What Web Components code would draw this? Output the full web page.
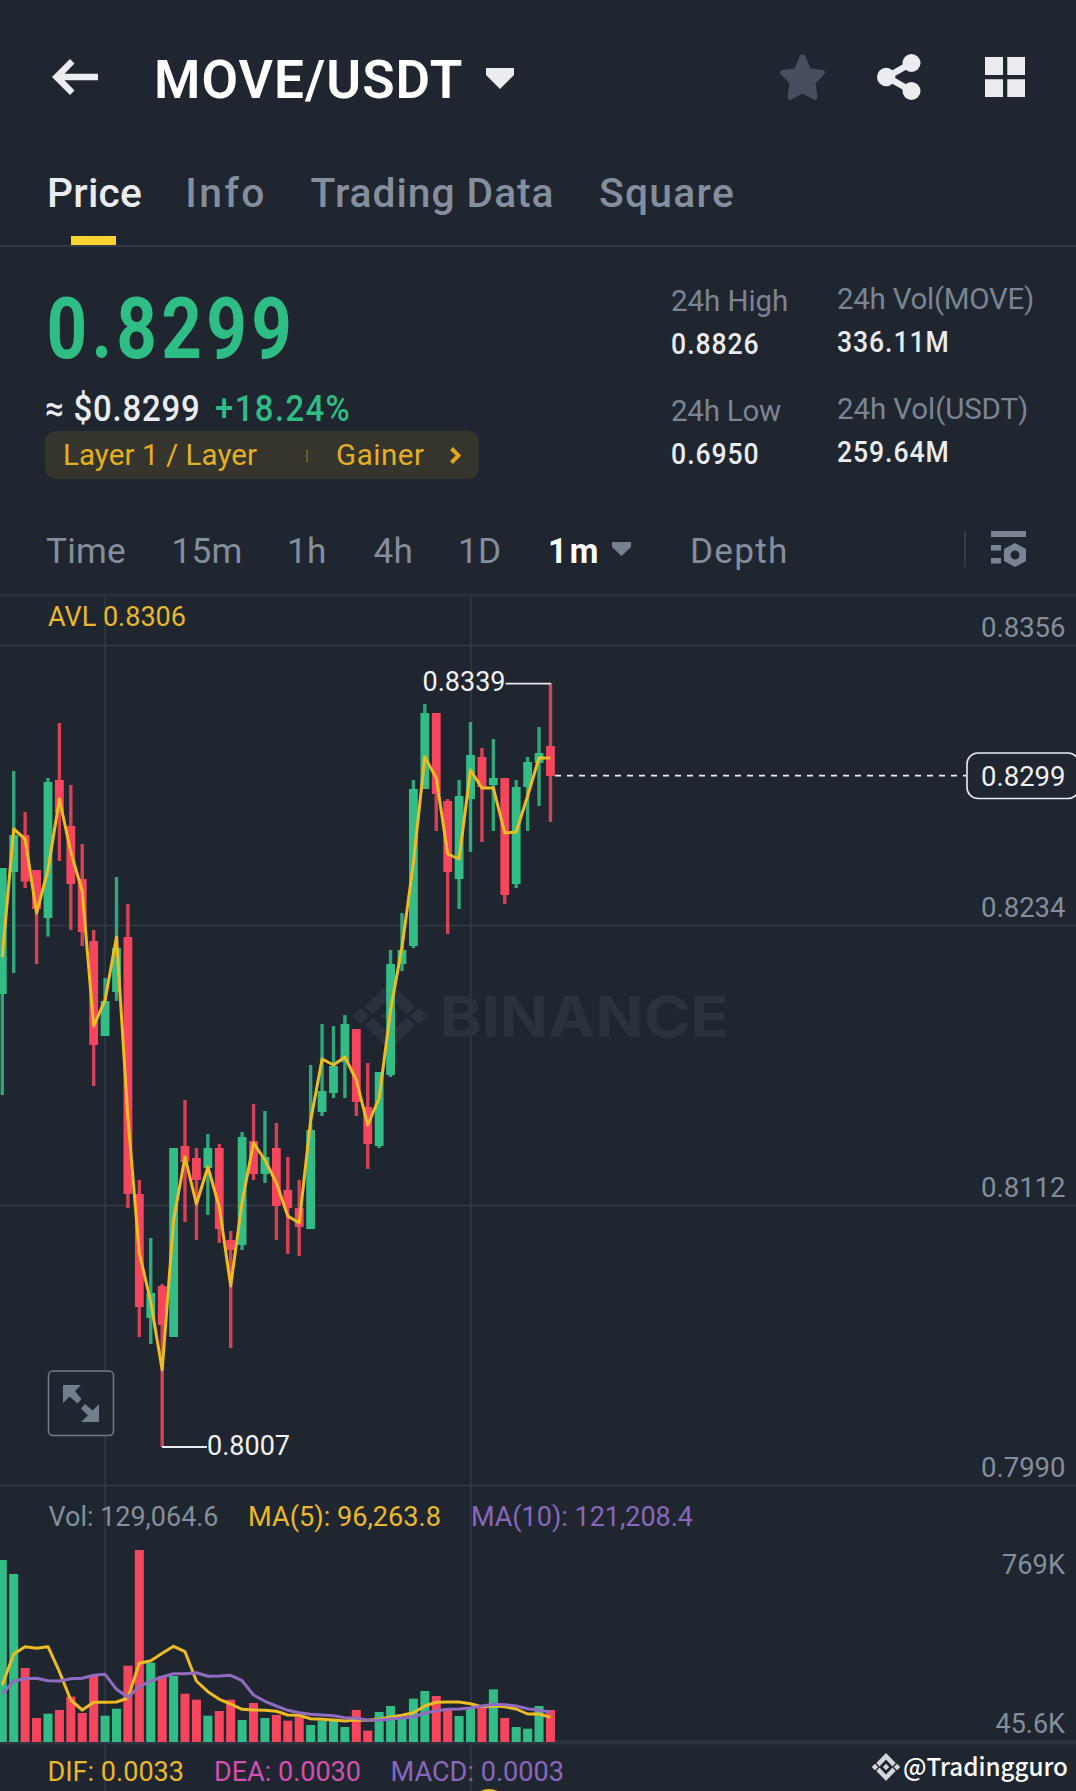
<!DOCTYPE html>
<html lang="en">
<head>
<meta charset="utf-8">
<title>MOVE/USDT</title>
<style>
    html, body {
        margin: 0;
        background: #1f2630;
    }

    body {
        width: 1076px;
        height: 1791px;
        overflow: hidden;
        color: #eaecef;
        font-family: Roboto, sans-serif;
    }
</style>
</head>
<body>
<pair-header>
    <fit-text width="305" cap="38.5" weight="600" stretch="0.98">MOVE/USDT</fit-text>
</pair-header>

<tab-bar>
    <tab-item active><fit-text width="92" cap="29" weight="500">Price</fit-text></tab-item>
    <tab-item><fit-text width="75" cap="29" weight="500">Info</fit-text></tab-item>
    <tab-item><fit-text width="242" cap="29" weight="500">Trading Data</fit-text></tab-item>
    <tab-item><fit-text width="133" cap="29" weight="500">Square</fit-text></tab-item>
</tab-bar>

<ticker-summary>
    <fit-text slot="price" width="240" cap="60" weight="700" stretch="0.84">0.8299</fit-text>
    <fit-text slot="fiat" width="152" cap="26" weight="500" stretch="0.9">≈ $0.8299</fit-text>
    <fit-text slot="change" width="133" cap="26" weight="500" stretch="0.9">+18.24%</fit-text>
    <tag-pill slot="tags">
        <fit-text width="192" cap="21">Layer 1 / Layer</fit-text>
        <fit-text slot="extra" width="87" cap="21">Gainer</fit-text>
    </tag-pill>
    <stat-item slot="stats">
        <fit-text slot="label" width="115" cap="21">24h High</fit-text>
        <fit-text width="86" cap="21" weight="500" stretch="0.9">0.8826</fit-text>
    </stat-item>
    <stat-item slot="stats" raised>
        <fit-text slot="label" width="195" cap="21">24h Vol(MOVE)</fit-text>
        <fit-text width="109" cap="21" weight="500" stretch="0.9">336.11M</fit-text>
    </stat-item>
    <stat-item slot="stats">
        <fit-text slot="label" width="109" cap="21">24h Low</fit-text>
        <fit-text width="86" cap="21" weight="500" stretch="0.9">0.6950</fit-text>
    </stat-item>
    <stat-item slot="stats" raised>
        <fit-text slot="label" width="189" cap="21">24h Vol(USDT)</fit-text>
        <fit-text width="109" cap="21" weight="500" stretch="0.9">259.64M</fit-text>
    </stat-item>
</ticker-summary>

<interval-bar>
    <fit-text width="79" cap="25">Time</fit-text>
    <fit-text width="67" cap="25">15m</fit-text>
    <fit-text width="36" cap="25">1h</fit-text>
    <fit-text width="38" cap="25">4h</fit-text>
    <fit-text width="39" cap="25">1D</fit-text>
    <fit-text slot="active" width="47" cap="25" weight="700" stretch="0.94">1m</fit-text>
    <fit-text slot="depth" width="94" cap="25">Depth</fit-text>
</interval-bar>

<kline-chart></kline-chart>

<script>
const attach = (el, html) => {
    el.attachShadow({ mode: 'open' }).innerHTML = html;
};

/**
 * One line of Roboto whose box is its cap height and its inked width.
 * Attributes: width, cap (px), weight, stretch (glyph width, 1 = natural);
 * what is left of the width goes into letter spacing.
 */
class FitText extends HTMLElement {
    // cap height and (ascent - descent), both in em
    static CAP = 0.711;
    static SHIFT = 0.684;

    connectedCallback() {
        const weight = this.getAttribute('weight') || 400;
        const width = Number(this.getAttribute('width'));
        const cap = Number(this.getAttribute('cap'));
        const scale = Number(this.getAttribute('stretch') || 1);
        const size = cap / FitText.CAP;
        const text = this.textContent.trim();

        const ctx = document.createElement('canvas').getContext('2d');
        ctx.font = `${weight} ${size}px Roboto`;
        const m = ctx.measureText(text);
        const ink = m.actualBoundingBoxRight + m.actualBoundingBoxLeft;
        const spacing = (width / scale - ink) / (text.length - 1);
        const left = m.actualBoundingBoxLeft * scale;

        attach(this, `
            <style>
                :host {
                    display: block;
                    flex: none;
                    width: ${width}px;
                    height: ${cap}px;
                    white-space: nowrap;
                    font: ${weight} ${size}px/${2 * cap - FitText.SHIFT * size}px Roboto, sans-serif;
                    letter-spacing: ${spacing}px;
                }
                span {
                    display: block;
                    width: max-content;
                    transform-origin: 0 0;
                    transform: translateX(${left}px) scaleX(${scale});
                }
            </style>
            <span><slot></slot></span>
        `);
    }
}

class PairHeader extends HTMLElement {
    constructor() {
        super();
        attach(this, `
            <style>
                :host {
                    display: flex;
                    align-items: center;
                    box-sizing: border-box;
                    height: 154px;
                    padding: 0 51px 0 52px;
                    color: #fff;
                }
                svg { display: block; flex: none; fill: #eaecef; }
                .title { margin: 4px 24px 0 59px; }
                .caret { margin-top: 2px; }
                .actions { display: flex; align-items: center; margin-left: auto; }
                .star { margin-right: 52px; fill: #474f5f; }
                .share { margin-right: 64px; }
            </style>
            <svg width="46" height="36" viewBox="0 0 46 36">
                <path d="M18 0l4.500 4.500L12.500 14.700H46v6.600H12.500L22.500 31.500 18 36 0 18z"/>
            </svg>
            <div class="title"><slot></slot></div>
            <svg class="caret" width="28" height="21" viewBox="0 0 28 21"><path d="M0 0h28v7L14 21 0 7z"/></svg>
            <div class="actions">
                <svg class="star" width="45" height="46" viewBox="0 0 45 46">
                    <path d="M20 1.500Q22.500-1 25 1.500L30.500 14.500 43 16Q46.500 17.500 44 20.500L35.500 29.500 37.500 43Q37 47 33.500 45.500L22.500 39.500 11.500 45.500Q8 47 7.500 43L9.500 29.500 1 20.500Q-1.500 17.500 2 16L14.500 14.500z"/>
                </svg>
                <svg class="share" width="44" height="46" viewBox="0 0 44 46">
                    <path d="M34.500 9L10 23l24.500 14" fill="none" stroke="#eaecef" stroke-width="6.500"/>
                    <circle cx="34.500" cy="9" r="9"/>
                    <circle cx="9.200" cy="23" r="9.200"/>
                    <circle cx="34.500" cy="37" r="9"/>
                </svg>
                <svg width="40" height="40" viewBox="0 0 40 40">
                    <path d="M0 0h18v18H0zM22.300 0H40v18H22.300zM0 22.300h18V40H0zM22.300 22.300H40V40H22.300z"/>
                </svg>
            </div>
        `);
    }
}

class TabBar extends HTMLElement {
    constructor() {
        super();
        attach(this, `
            <style>
                :host {
                    display: flex;
                    gap: 47.300px;
                    box-sizing: border-box;
                    height: 93px;
                    padding: 24px 49px 0;
                    border-bottom: 2px solid #343b47;
                }
            </style>
            <slot></slot>
        `);
    }
}

class TabItem extends HTMLElement {
    constructor() {
        super();
        attach(this, `
            <style>
                :host { display: block; color: #848e9c; }
                :host([active]) { color: #eaecef; }
                i { display: none; width: 45px; height: 9px; margin: 29px 0 0 22px; background: #fcd535; }
                :host([active]) i { display: block; }
            </style>
            <slot></slot><i></i>
        `);
    }
}

class TickerSummary extends HTMLElement {
    constructor() {
        super();
        attach(this, `
            <style>
                :host {
                    display: flex;
                    justify-content: space-between;
                    box-sizing: border-box;
                    height: 253px;
                    padding: 0 43px 0 45px;
                }
                .main { padding-top: 52px; }
                .price { margin-left: 4px; color: #2ebd85; }
                .sub { display: flex; gap: 18px; margin: 36px 0 10px 1px; }
                .change { color: #2ebd85; }
                .stats {
                    display: grid;
                    grid-template-columns: 166px 195px;
                    grid-auto-rows: 110px;
                    padding-top: 44px;
                }
            </style>
            <div class="main">
                <div class="price"><slot name="price"></slot></div>
                <div class="sub">
                    <slot name="fiat"></slot>
                    <div class="change"><slot name="change"></slot></div>
                </div>
                <slot name="tags"></slot>
            </div>
            <div class="stats"><slot name="stats"></slot></div>
        `);
    }
}

class TagPill extends HTMLElement {
    constructor() {
        super();
        attach(this, `
            <style>
                :host {
                    display: flex;
                    align-items: center;
                    box-sizing: border-box;
                    width: 434px;
                    height: 48px;
                    padding: 1px 18px 0 20px;
                    border-radius: 11px;
                    background: #35342d;
                    color: #e3b021;
                }
                i { width: 2px; height: 12px; margin: 0 29px 0 49px; background: #6f5b25; }
                svg { margin-left: auto; }
            </style>
            <slot></slot><i></i><slot name="extra"></slot>
            <svg width="11" height="17" viewBox="0 0 11 17"><path d="M1.500 1.500l7 7-7 7" fill="none" stroke="#dfa81d" stroke-width="4"/></svg>
        `);
    }
}

class StatItem extends HTMLElement {
    constructor() {
        super();
        attach(this, `
            <style>
                :host { display: flex; flex-direction: column; gap: 22px; color: #eaecef; }
                :host([raised]) { margin-top: -2px; }
                .label { color: #7b8492; }
            </style>
            <div class="label"><slot name="label"></slot></div>
            <slot></slot>
        `);
    }
}

class IntervalBar extends HTMLElement {
    constructor() {
        super();
        attach(this, `
            <style>
                :host {
                    display: flex;
                    align-items: center;
                    box-sizing: border-box;
                    height: 97px;
                    padding: 4px 50px 0 46px;
                    border-bottom: 4px solid #29303b;
                    color: #848e9c;
                }
                .plain { display: flex; gap: 48.500px; }
                .plain, .depth { margin-top: 5px; }
                .active { display: flex; gap: 15px; margin: 5px 61px 0 51px; color: #fff; }
                .active svg { margin-top: 3px; }
                .tools { display: flex; align-items: center; gap: 25px; margin-left: auto; }
                i { width: 2px; height: 36px; background: #343b47; }
            </style>
            <div class="plain"><slot></slot></div>
            <div class="active">
                <slot name="active"></slot>
                <svg width="19" height="14" viewBox="0 0 19 14"><path d="M0 0h19v5l-9.500 9L0 5z" fill="#76808f"/></svg>
            </div>
            <div class="depth"><slot name="depth"></slot></div>
            <div class="tools">
                <i></i>
                <svg width="35" height="36" viewBox="0 0 35 36" fill="#7a8494">
                    <path d="M0 0h35v6H0zM0 14h10v5.500H0zM0 27h10v5.500H0z"/>
                    <path fill-rule="evenodd" d="M24 12l11 6v12l-11 6-11-6V18zM24 19.500a4.500 4.500 0 1 0 0 9 4.500 4.500 0 0 0 0-9z"/>
                </svg>
            </div>
        `);
    }
}

/**
 * Candles with average line, volume pane, axis labels and legends
 */
class KlineChart extends HTMLElement {
    static STEP = 11.42;

    // direction, high, body top, body bottom, low, average
    static CANDLES = [
        ['u', 868, 868, 994, 1095, 957], ['u', 771, 835, 872, 973, 829], ['d', 812, 835, 881.5, 888, 839],
        ['d', 870, 870, 909, 964, 913], ['u', 778, 782, 918, 936.5, 870], ['d', 723, 780, 813, 861, 799],
        ['d', 785, 826, 884, 930, 852], ['d', 844, 879, 932, 946, 891], ['d', 930, 941, 1045, 1086, 1026],
        ['u', 978, 1001, 1036, 1036, 1000], ['u', 877, 948, 992, 1001, 937], ['d', 904, 937, 1194, 1208, 1118],
        ['d', 1180, 1194, 1307, 1337, 1253], ['u', 1238, 1293, 1318, 1344, 1302], ['d', 1284, 1286, 1325, 1447, 1370],
        ['u', 1148, 1148, 1337, 1337, 1220], ['d', 1100, 1146, 1162, 1222, 1157], ['d', 1148, 1158, 1180, 1240, 1204],
        ['u', 1134, 1148, 1168, 1215, 1167], ['d', 1144, 1148, 1229, 1243, 1207], ['d', 1231, 1240, 1250, 1348, 1286],
        ['u', 1132, 1137, 1245, 1250, 1202], ['d', 1104, 1141, 1174, 1180, 1143], ['u', 1111, 1157, 1174, 1183, 1160],
        ['d', 1123, 1148, 1206, 1240, 1183], ['d', 1157, 1190, 1208, 1254, 1216], ['d', 1180, 1208, 1227, 1256, 1223],
        ['u', 1065, 1130, 1229, 1229, 1121], ['u', 1024, 1091, 1112, 1116, 1059], ['u', 1026, 1066, 1093, 1098, 1065],
        ['u', 1015, 1024, 1062, 1098, 1057], ['d', 1029, 1029, 1102, 1116, 1080], ['d', 1063, 1107, 1144, 1169, 1125],
        ['u', 1072, 1072, 1146, 1148, 1098], ['u', 950, 964, 1075, 1077, 1010], ['u', 913, 950, 964, 971, 947],
        ['u', 780, 789, 946, 948, 863], ['u', 704, 713, 789, 789, 757], ['d', 713, 713, 794, 831, 778],
        ['d', 799, 801, 872, 934, 854], ['u', 780, 796, 879, 909, 859], ['u', 722, 755, 799, 852, 770],
        ['d', 748, 757, 787, 842, 788], ['u', 739, 778, 785, 831, 788], ['d', 778, 778, 895, 904, 833],
        ['u', 780, 787, 884, 888, 832], ['u', 757, 762, 787, 831, 796], ['u', 727, 753, 763, 806, 758],
        ['d', 683, 746, 776, 822, 758]
    ];

    // volume pane values count thirds of a pixel down from y = 1490
    static VOLUME = [
        210, 252, 534, 684, 671, 660, 620, 669, 556, 677, 656, 527, 180, 518, 558, 558, 611,
        629, 677, 663, 629, 690, 639, 684, 675, 692, 680, 705, 692, 692, 711, 660, 722, 666,
        648, 682, 626, 603, 618, 656, 678, 655, 652, 598, 684, 711, 716, 648, 660
    ];

    static MA5 = [
        585, 492, 470, 475, 470, 545, 630, 660, 637, 637, 636, 624, 520, 512, 490, 469, 485,
        573, 605, 628, 642, 658, 660, 661, 664, 675, 676, 686, 688, 690, 693, 690, 691, 688,
        681, 676, 668, 648, 637, 636, 636, 641, 650, 648, 650, 657, 672, 672, 682
    ];

    static MA10 = [
        612, 573, 566, 565, 572, 573, 566, 565, 556, 553, 598, 622, 590, 573, 561, 551, 551,
        548, 559, 558, 556, 572, 615, 634, 648, 661, 668, 673, 675, 677, 683, 685, 691, 690,
        687, 684, 681, 669, 662, 658, 657, 654, 648, 643, 644, 648, 656, 661, 666
    ];

    // class, text, x, baseline, length
    static LABELS = [
        ['avl', 'AVL 0.8306', 48, 626, 138],
        ['axis', '0.8356', 981, 637, 84.5], ['axis', '0.8234', 981, 917, 84.5],
        ['axis', '0.8112', 981, 1197, 84.5], ['axis', '0.7990', 981, 1477, 84.5],
        ['axis', '769K', 1002, 1574, 63], ['axis', '45.6K', 995.5, 1733, 69.5],
        ['mark', '0.8339', 422.5, 691, 83], ['mark', '0.8007', 207, 1455, 83],
        ['mark', '0.8299', 981, 786, 84.5],
        ['axis', 'Vol: 129,064.6', 48.5, 1526, 170],
        ['avl', 'MA(5): 96,263.8', 248, 1526, 193],
        ['ma10', 'MA(10): 121,208.4', 471, 1526, 222],
        ['avl', 'DIF: 0.0033', 47.5, 1781, 136.5],
        ['dea', 'DEA: 0.0030', 214, 1781, 147],
        ['ma10', 'MACD: 0.0003', 390.5, 1781, 173.5]
    ];

    constructor() {
        super();
        this.attachShadow({ mode: 'open' });
        this.render();
    }

    x(i) {
        return 2.3 + i * KlineChart.STEP;
    }

    line(values, y, cls) {
        const points = values.map((v, i) => `${this.x(i).toFixed(1)},${y(v).toFixed(1)}`).join(' ');
        return `<polyline class="${cls}" points="${points}"/>`;
    }

    candles() {
        return KlineChart.CANDLES.map(([dir, high, top, bottom, low], i) => `
            <g class="${dir}">
                <rect class="wick" x="${this.x(i) - 1.7}" y="${high}" width="3.400" height="${low - high}"/>
                <rect x="${this.x(i) - 4.4}" y="${top}" width="8.800" height="${bottom - top}"/>
            </g>`).join('');
    }

    volume() {
        return KlineChart.VOLUME.map((v, i) => {
            const y = 1490 + v / 3;
            return `<rect class="${KlineChart.CANDLES[i][0]}" x="${this.x(i) - 4.5}" y="${y}" width="9" height="${1742 - y}"/>`;
        }).join('');
    }

    labels() {
        return KlineChart.LABELS.map(([cls, text, x, y, length]) =>
            `<text class="${cls}" x="${x}" y="${y}" textLength="${length}" lengthAdjust="spacingAndGlyphs">${text}</text>`
        ).join('');
    }

    render() {
        const pane = v => 1490 + v / 3;
        this.shadowRoot.innerHTML = `
            <style>
                :host { display: block; height: 1194px; }
                svg { display: block; }
                text { font: 400 28.500px Roboto, sans-serif; }
                .grid { stroke: #323945; stroke-width: 1.500; fill: none; }
                .u { fill: #33bd86; }
                .d { fill: #f6465d; }
                .wick { opacity: 0.86; }
                polyline { fill: none; stroke-width: 3; stroke-linejoin: round; }
                polyline.avl { stroke: #eebb22; }
                polyline.ma10 { stroke: #8f6cc0; }
                text.avl { fill: #e9b929; }
                text.ma10 { fill: #8a67bd; }
                text.dea { fill: #d34fb0; }
                text.axis { fill: #848e9c; }
                text.mark { fill: #f0f2f5; }
                .water { fill: #2c323d; }
                text.brand { font: 700 57px Inter, sans-serif; }
                text.user { font: 500 24.500px "Noto Sans CJK SC", "Noto Sans", sans-serif; fill: #fff; }
                .logo { fill: #d5d6d8; }
                .leader { stroke: #eaecef; stroke-width: 1.800; fill: none; }
            </style>
            <svg width="1076" height="1194" viewBox="0 597 1076 1194">
                <defs>
                    <g id="mark">
                        <path d="M0-33L25.500-8.500 17-.500 0-17-17-.500-25.500-8.500z" transform="translate(0 -1)"/>
                        <path d="M0 33L25.500 8.500 17 .500 0 17-17 .500-25.500 8.500z" transform="translate(0 1)"/>
                        <path d="M-29-8l8.500 8-8.500 8-8.500-8zM29-8l8.500 8L29 8l-8.500-8zM0-8l8.500 8L0 8l-8.500-8z"/>
                    </g>
                </defs>
                <path class="grid" d="M105 597V1791M471 597V1791M0 645.500H1076M0 925.500H1076M0 1205.500H1076M0 1485.500H1076"/>
                <path d="M0 1742.500H1076" stroke="#2d343f" stroke-width="4"/>
                <g class="water">
                    <use href="#mark" x="390" y="1016"/>
                    <text class="brand" x="440" y="1036.500" textLength="289" lengthAdjust="spacingAndGlyphs">BINANCE</text>
                </g>
                ${this.candles()}
                ${this.line(KlineChart.CANDLES.map(c => c[5]), v => v, 'avl')}
                ${this.volume()}
                ${this.line(KlineChart.MA5, pane, 'avl')}
                ${this.line(KlineChart.MA10, pane, 'ma10')}
                <path class="leader" d="M505.500 683.700H551M162 1447H207"/>
                <path class="leader" d="M555 775.700H966" stroke-dasharray="6 6"/>
                <rect x="967" y="753" width="112" height="45.500" rx="11" fill="#1f2630" stroke="#eaecef" stroke-width="1.600"/>
                <rect x="48.500" y="1371" width="65" height="64.500" rx="4.500" fill="#1f2630" stroke="#727b8a" stroke-width="1.500"/>
                <path fill="#747d8e" d="M63 1385h18l-6 6 6.500 8-4 4.500-8-7-6.500 6.500zM99 1422H81l7-6.500-7-7 4-4.500 7.500 6.500 6.500-6.500z"/>
                ${this.labels()}
                <path d="M478 1794q11-7 22 0" fill="none" stroke="#eebb22" stroke-width="3"/>
                <use class="logo" href="#mark" transform="translate(886 1767) scale(0.38 0.41)"/>
                <text class="user" x="903" y="1776" textLength="165" lengthAdjust="spacingAndGlyphs">@Tradingguro</text>
            </svg>
        `;
    }
}

customElements.define('fit-text', FitText);
customElements.define('pair-header', PairHeader);
customElements.define('tab-bar', TabBar);
customElements.define('tab-item', TabItem);
customElements.define('ticker-summary', TickerSummary);
customElements.define('tag-pill', TagPill);
customElements.define('stat-item', StatItem);
customElements.define('interval-bar', IntervalBar);
customElements.define('kline-chart', KlineChart);
</script>
</body>
</html>
